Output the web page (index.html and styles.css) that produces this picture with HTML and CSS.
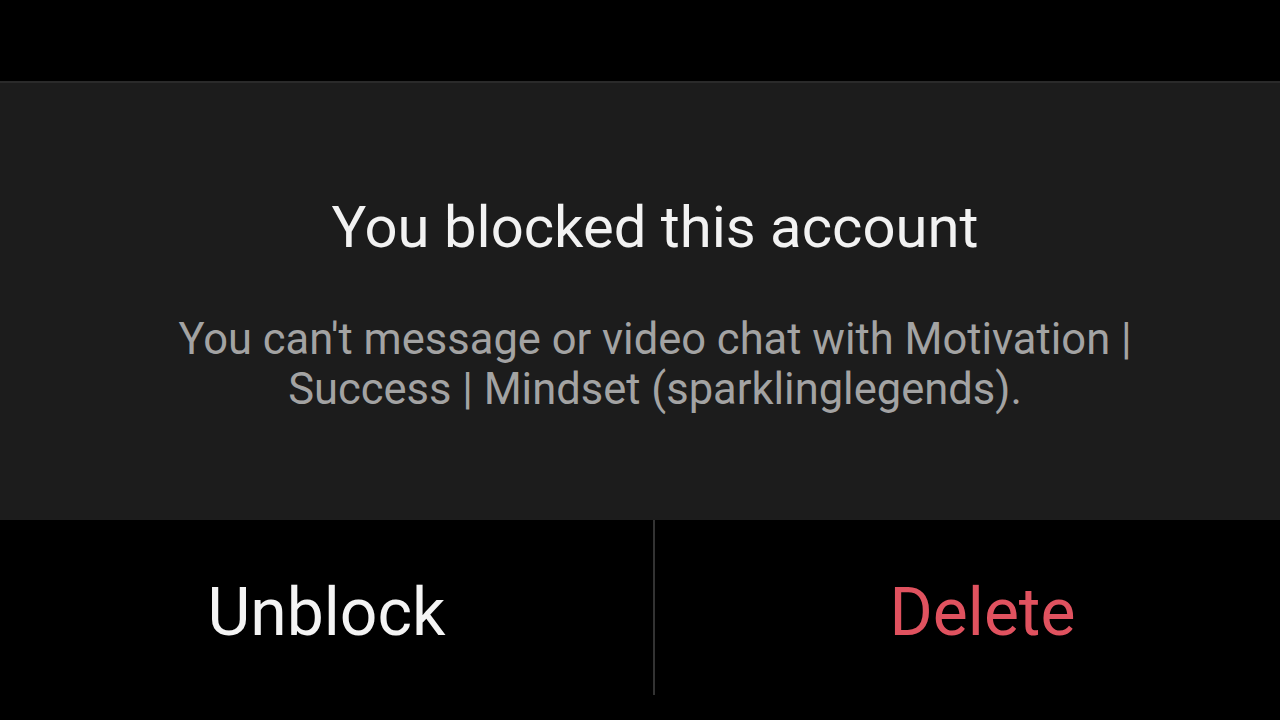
FILE: index.html
```html
<!DOCTYPE html>
<html>
<head>
	<meta charset="utf-8" />
	<title>Blocked</title>
	<link rel="stylesheet" href="styles.css">
</head>
<body>
	<div class="topbar"></div>
	<div class="panel">
		<div class="heading">You blocked this account</div>
		<div class="message">You can't message or video chat with Motivation |<br />Success | Mindset (sparklinglegends).</div>
	</div>
	<div class="actions">
		<div class="action unblock">Unblock</div>
		<div class="action delete">Delete</div>
	</div>
</body>
</html>
```

FILE: styles.css
```css
body {
	margin: 0;
	background: #000;
	font-family: Roboto, "Noto Sans", sans-serif;
	text-align: center;
	overflow: hidden;
}

.topbar {
	height: 81px;
}

.panel {
	height: 437px;
	padding-left: 30px;
	background: #1c1c1c;
	border-top: 2px solid #2a2a2a;
}

.heading {
	padding-top: 112px;
	font-size: 58px;
	line-height: 64px;
	color: #f2f2f2;
}

.message {
	margin-top: 56px;
	font-size: 43.5px;
	line-height: 50px;
	color: #a3a3a3;
	white-space: nowrap;
}

.actions {
	display: flex;
	height: 175px;
	padding-bottom: 25px;
}

.action {
	display: flex;
	align-items: center;
	justify-content: center;
	padding-top: 9px;
	font-size: 66px;
}

.unblock {
	width: 653px;
	color: #f4f4f4;
}

.delete {
	flex: 1;
	border-left: 2px solid #333;
	color: #e0525f;
	padding-left: 30px;
}
```
